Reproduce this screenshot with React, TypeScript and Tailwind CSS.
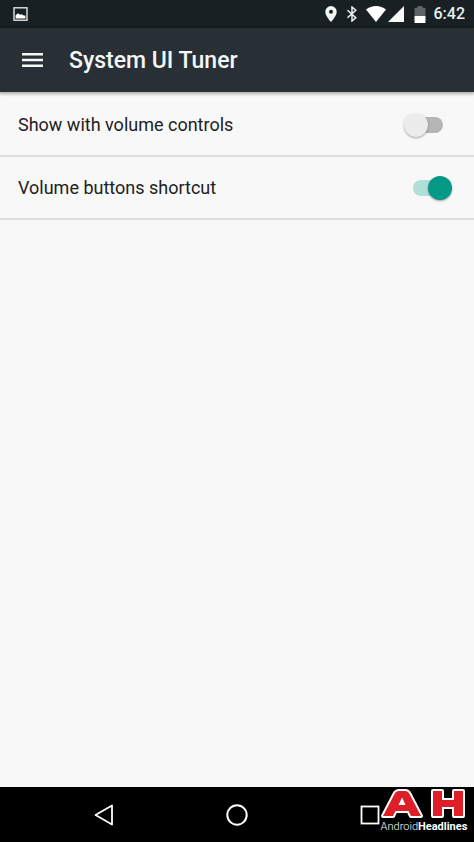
import { useState } from "react";

function StatusBar() {
  return (
    <div className="flex h-7 shrink-0 items-center justify-between bg-[#182023] pl-[13px] pr-[9px] text-white">
      <svg width="15" height="14" viewBox="0 0 15 14" fill="none" aria-label="Screenshot saved">
        <rect x="1" y="0.8" width="13" height="12.4" stroke="#dfe3e4" strokeWidth="1.4" />
        <path d="M2.6 11.4V8.2L5 6.2l2 1.6 1.6-.5 1.6 1 2.200.5v2.600z" fill="#fff" />
      </svg>
      <div className="flex items-center">
        <svg className="mr-[9px]" width="12" height="16" viewBox="0 0 12 16" aria-label="Location">
          <path
            fillRule="evenodd"
            d="M6 0a5.7 5.7 0 0 0-5.7 5.7C.3 9.9 6 16 6 16s5.7-6.1 5.7-10.3A5.7 5.7 0 0 0 6 0zm0 3.7a2 2 0 1 1 0 4 2 2 0 0 1 0-4z"
            fill="#f4f6f6"
          />
        </svg>
        <svg className="mr-[8px]" width="12" height="16" viewBox="0 0 12 16" fill="none" stroke="#eef0f1" strokeWidth="1.5" aria-label="Bluetooth">
          <path d="M1.500 4.200 9.800 11.800 6 15V1l3.800 3.200L1.500 11.800" />
        </svg>
        <svg className="mr-[2px]" width="20" height="16" viewBox="0 0 20 16" aria-label="Wi-Fi">
          <path d="M0 3.600C2.800 1.300 6.200 0 10 0s7.200 1.300 10 3.600L10 16z" fill="#fff" />
        </svg>
        <svg className="mr-[10px]" width="16" height="16" viewBox="0 0 16 16" aria-label="Signal">
          <path d="M16 0v16H0z" fill="#f7f8f8" />
        </svg>
        <svg className="mr-[8px]" width="12" height="17" viewBox="0 0 12 17" aria-label="Battery">
          <path d="M3.600 0h4.800v1.800h2.400q.7 0 .7.7V10H.5V2.500q0-.7.7-.7h2.400z" fill="#5f6567" />
          <path d="M.5 10h11v6.300q0 .7-.7.7H1.200q-.7 0-.7-.7z" fill="#fff" />
        </svg>
        <time className="text-[16px] leading-7 font-medium text-[#eceff0]">6:42</time>
      </div>
    </div>
  );
}

function Header() {
  return (
    <header className="z-10 flex h-16 shrink-0 items-center bg-[#283036] pl-[22px] text-[#f5f7f7] shadow-[0_1px_3px_1px_rgba(0,0,0,0.3)]">
      <button type="button" aria-label="Open menu" className="mr-[26px] flex">
        <svg width="21" height="14" viewBox="0 0 21 14" fill="currentColor">
          <path d="M0 0h21v2.400H0zM0 5.800h21v2.400H0zM0 11.600h21V14H0z" />
        </svg>
      </button>
      <h1 className="pt-[2px] text-[23px] leading-8 font-medium">System UI Tuner</h1>
    </header>
  );
}

function SettingRow({ id, label, initial }: { id: string; label: string; initial: boolean }) {
  const [on, setOn] = useState(initial);
  return (
    <li className="flex h-[63px] items-center justify-between border-b-2 border-[#dedede] pl-[18px] pr-[22px]">
      <label htmlFor={id} className="text-[18px] leading-6 text-[#212121]">
        {label}
      </label>
      <input
        id={id}
        type="checkbox"
        role="switch"
        checked={on}
        onChange={(e) => setOn(e.target.checked)}
        className="relative h-6 w-12 appearance-none before:absolute before:inset-x-[9px] before:inset-y-1 before:rounded-full before:bg-[#b5b5b5] after:absolute after:top-0 after:left-0 after:size-6 after:rounded-full after:bg-[#ececec] after:shadow-[0_1px_2px_rgba(0,0,0,0.35)] checked:before:bg-[#b0dfd7] checked:after:left-6 checked:after:bg-[#069985]"
      />
    </li>
  );
}

const LETTER_A = "M4 28 15.500 6q1.500-3 4.500-3h6q3 0 4.500 3L42 28H32l-2.500-5h-13L14 28zM19.500 17h7L23 9.500z";
const LETTER_H = "M54 3h9v9h12V3h9v25h-9v-9H63v9h-9z";

function Watermark() {
  return (
    <div className="absolute right-[5px] bottom-[9px] flex w-[90px] flex-col items-center">
      <svg width="90" height="33" viewBox="0 0 90 33" aria-label="AH logo">
        <g fillRule="evenodd" fill="#fff" stroke="#fff" strokeWidth="4" strokeLinejoin="round">
          <path d={LETTER_A} />
          <path d={LETTER_H} />
        </g>
        <g fillRule="evenodd" fill="#df1f27">
          <path d={LETTER_A} />
          <path d={LETTER_H} />
        </g>
      </svg>
      <p className="text-[11px] leading-3 whitespace-nowrap text-white">
        <span className="font-light">Android</span>
        <span className="font-bold">Headlines</span>
      </p>
    </div>
  );
}

function NavBar() {
  return (
    <nav className="relative flex h-[55px] shrink-0 items-center justify-center gap-[111px] bg-black text-white">
      <button type="button" aria-label="Back">
        <svg width="22" height="22" viewBox="0 0 22 22" fill="none" stroke="currentColor" strokeWidth="1.8" strokeLinejoin="round">
          <path d="M19 1.500v19L2.500 11z" />
        </svg>
      </button>
      <button type="button" aria-label="Home">
        <svg width="22" height="22" viewBox="0 0 22 22" fill="none" stroke="currentColor" strokeWidth="2">
          <circle cx="11" cy="11" r="9.7" />
        </svg>
      </button>
      <button type="button" aria-label="Recent apps">
        <svg width="22" height="22" viewBox="0 0 22 22" fill="none" stroke="currentColor" strokeWidth="1.8">
          <rect x="2.5" y="2.5" width="17" height="17" />
        </svg>
      </button>
      <Watermark />
    </nav>
  );
}

export default function App() {
  return (
    <div className="flex min-h-screen flex-col bg-[#f8f8f8] font-[Roboto,sans-serif]">
      <StatusBar />
      <Header />
      <main className="flex-1 pt-[2px]">
        <ul>
          <SettingRow id="volume-controls" label="Show with volume controls" initial={false} />
          <SettingRow id="volume-shortcut" label="Volume buttons shortcut" initial={true} />
        </ul>
      </main>
      <NavBar />
    </div>
  );
}
